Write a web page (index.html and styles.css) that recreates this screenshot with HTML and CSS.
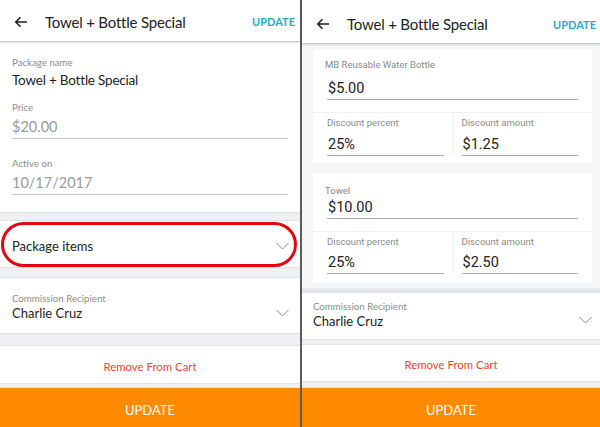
FILE: index.html
```html
<!DOCTYPE html>
<html>
<head>
<meta charset="utf-8">
<link rel="stylesheet" href="styles.css">
</head>
<body>
<div class="stage">
  <section class="screen screen-left">
    <header class="topbar">
      <svg class="back" width="14" height="12" viewBox="0 0 14 12"><path d="M13 6H2M6.5 1.2L1.7 6l4.8 4.8" fill="none" stroke="#222" stroke-width="1.6"/></svg>
      <span class="title">Towel + Bottle Special</span>
      <span class="action">UPDATE</span>
    </header>
    <div class="form">
      <div class="label">Package name</div>
      <div class="plain-value">Towel + Bottle Special</div>
      <div class="label l-price">Price</div>
      <div class="input muted">$20.00</div>
      <div class="label l-active">Active on</div>
      <div class="input muted">10/17/2017</div>
    </div>
    <div class="gap gap-a"></div>
    <div class="row items">
      <span>Package items</span>
      <svg class="chev" width="13" height="8" viewBox="0 0 13 8"><path d="M0.5 1L6.5 7L12.5 1" fill="none" stroke="#888" stroke-width="1"/></svg>
      <div class="highlight"></div>
    </div>
    <div class="gap gap-b"></div>
    <div class="select left-select">
      <div class="sel-text">
        <div class="label">Commission Recipient</div>
        <div class="sel-value">Charlie Cruz</div>
      </div>
      <svg class="chev sel-chev" width="13" height="8" viewBox="0 0 13 8"><path d="M0.5 1L6.5 7L12.5 1" fill="none" stroke="#888" stroke-width="1"/></svg>
    </div>
    <div class="gap gap-c"></div>
    <div class="remove r-left">Remove From Cart</div>
    <div class="gap gap-d"></div>
    <div class="cta">UPDATE</div>
  </section>
  <div class="divider"></div>
  <section class="screen screen-right">
    <header class="topbar tall">
      <svg class="back" width="14" height="12" viewBox="0 0 14 12"><path d="M13 6H2M6.5 1.2L1.7 6l4.8 4.8" fill="none" stroke="#222" stroke-width="1.6"/></svg>
      <span class="title">Towel + Bottle Special</span>
      <span class="action">UPDATE</span>
    </header>
    <div class="cards">
      <div class="card">
        <div class="card-top">
          <div class="c-label">MB Reusable Water Bottle</div>
          <div class="c-input first">$5.00</div>
        </div>
        <div class="card-cols">
          <div class="col">
            <div class="c-label">Discount percent</div>
            <div class="c-input">25%</div>
          </div>
          <div class="col">
            <div class="c-label">Discount amount</div>
            <div class="c-input">$1.25</div>
          </div>
        </div>
      </div>
      <div class="card second">
        <div class="card-top">
          <div class="c-label">Towel</div>
          <div class="c-input tight">$10.00</div>
        </div>
        <div class="card-cols">
          <div class="col">
            <div class="c-label">Discount percent</div>
            <div class="c-input">25%</div>
          </div>
          <div class="col">
            <div class="c-label">Discount amount</div>
            <div class="c-input">$2.50</div>
          </div>
        </div>
      </div>
    </div>
    <div class="gap gap-e"></div>
    <div class="select right-select">
      <div class="sel-text">
        <div class="label">Commission Recipient</div>
        <div class="sel-value">Charlie Cruz</div>
      </div>
      <svg class="chev sel-chev" width="13" height="8" viewBox="0 0 13 8"><path d="M0.5 1L6.5 7L12.5 1" fill="none" stroke="#888" stroke-width="1"/></svg>
    </div>
    <div class="gap gap-f"></div>
    <div class="remove r-right">Remove From Cart</div>
    <div class="gap gap-g"></div>
    <div class="cta">UPDATE</div>
  </section>
</div>
</body>
</html>
```

FILE: styles.css
```css
* { box-sizing: border-box; }
html, body { margin: 0; padding: 0; }
body {
  width: 600px;
  height: 427px;
  overflow: hidden;
  background: #fff;
  font-family: Lato, "Noto Sans", sans-serif;
  color: #222;
}
.stage { display: flex; height: 427px; }
.screen { display: flex; flex-direction: column; height: 427px; background: #fff; }
.screen-left { width: 300px; }
.screen-right { width: 298px; }
.divider { width: 2px; background: #5c5c5c; }

.topbar {
  height: 42px;
  flex: none;
  display: flex;
  align-items: center;
  padding: 2px 5px 0 14px;
  border-bottom: 1px solid #c9c9c9;
  box-shadow: 0 1px 2px rgba(0,0,0,0.12);
  position: relative;
  z-index: 1;
  background: #fff;
}
.topbar.tall { height: 44px; padding-top: 5px; }
.back { flex: none; }
.title { margin-left: 17px; font-size: 15px; letter-spacing: -0.2px; flex: 1; }
.action { font-size: 11px; font-weight: 700; color: #2ba8c8; }
.topbar.tall .action { margin-right: -1px; }

.form { height: 170px; flex: none; padding: 13px 12px 0 12px; }
.label { font-size: 9.7px; line-height: 14px; color: #8b8b8b; }
.plain-value { font-size: 13.5px; letter-spacing: -0.2px; line-height: 18px; margin-top: 2px; }
.l-price { margin-top: 11px; }
.l-active { margin-top: 17px; }
.input {
  font-size: 14.5px;
  line-height: 20px;
  margin-top: 3px;
  padding-bottom: 1px;
  border-bottom: 1px solid #c3c5cb;
}
.muted { color: #9a9a9a; }

.gap { flex: none; background: #eff0f2; border-top: 1px solid #e0e1e4; border-bottom: 1px solid #e0e1e4; }
.gap-a { height: 9px; }
.gap-b { height: 11px; }
.gap-c { height: 13px; }
.gap-d { height: 5px; }
.gap-e { height: 10px; border-top: none; background: linear-gradient(#f5f6f8 0 5px, #e4e5e8 5px); }
.gap-f { height: 6px; }
.gap-g { height: 7px; }

.row.items {
  height: 46px;
  flex: none;
  display: flex;
  align-items: center;
  justify-content: space-between;
  padding: 4px 11px 0 12px;
  font-size: 13px;
  position: relative;
}
.highlight {
  position: absolute;
  left: 1px;
  right: 3px;
  top: 1px;
  bottom: 0px;
  border: 3px solid #e8000f;
  border-radius: 23px;
}
.select {
  flex: none;
  display: flex;
  align-items: flex-start;
  justify-content: space-between;
}
.left-select { height: 55px; padding: 13px 11px 0 12px; }
.right-select { height: 46px; padding: 6px 8px 0 11px; }
.sel-value { font-size: 13px; line-height: 16px; }
.chev { flex: none; }
.sel-chev { margin-top: 18px; }
.right-select .sel-chev { margin-top: 17px; }

.remove {
  flex: none;
  display: flex;
  align-items: center;
  justify-content: center;
  font-size: 11.4px;
  color: #f1452a;
}
.r-left { height: 37px; padding-top: 3px; }
.r-right { height: 36px; padding-top: 2px; }

.cta {
  flex: 1;
  background: #ff8a00;
  color: #fff;
  font-size: 13px;
  display: flex;
  align-items: center;
  justify-content: center;
  padding-top: 4px;
}

.cards {
  flex: none;
  height: 239px;
  background: #f5f6f8;
  padding: 5px 8px 0 11px;
  display: flex;
  flex-direction: column;
  gap: 10px;
}
.card {
  background: #fff;
  border-radius: 3px;
  height: 114px;
  font-family: Roboto, "Noto Sans", sans-serif;
}
.card.second { height: 110px; }
.card-top { padding: 9px 14px 12px 12px; border-bottom: 1px solid #eef0f2; }
.card.second .card-top { padding-top: 11px; padding-bottom: 12px; }
.c-label { font-size: 9.5px; line-height: 14px; color: #8a8a8a; }
.card-top .c-input { margin-left: 2px; }
.c-input {
  font-size: 14.5px;
  line-height: 20px;
  color: #222;
  border-bottom: 1.5px solid #a9abb0;
  padding-left: 1px;
  margin-top: 5px;
}
.c-input.first { margin-top: 7px; }
.c-input.tight { margin-top: 0; }
.card-cols { display: flex; }
.col { flex: 1; padding: 3px 9px 0 14px; }
.col + .col { border-left: 1px solid #eef0f2; padding-left: 8px; padding-right: 14px; }
.card.second .col { padding-top: 3px; }
.card.second .c-input { margin-top: 4px; }
.card.second .c-input.tight { margin-top: 0; }
```
